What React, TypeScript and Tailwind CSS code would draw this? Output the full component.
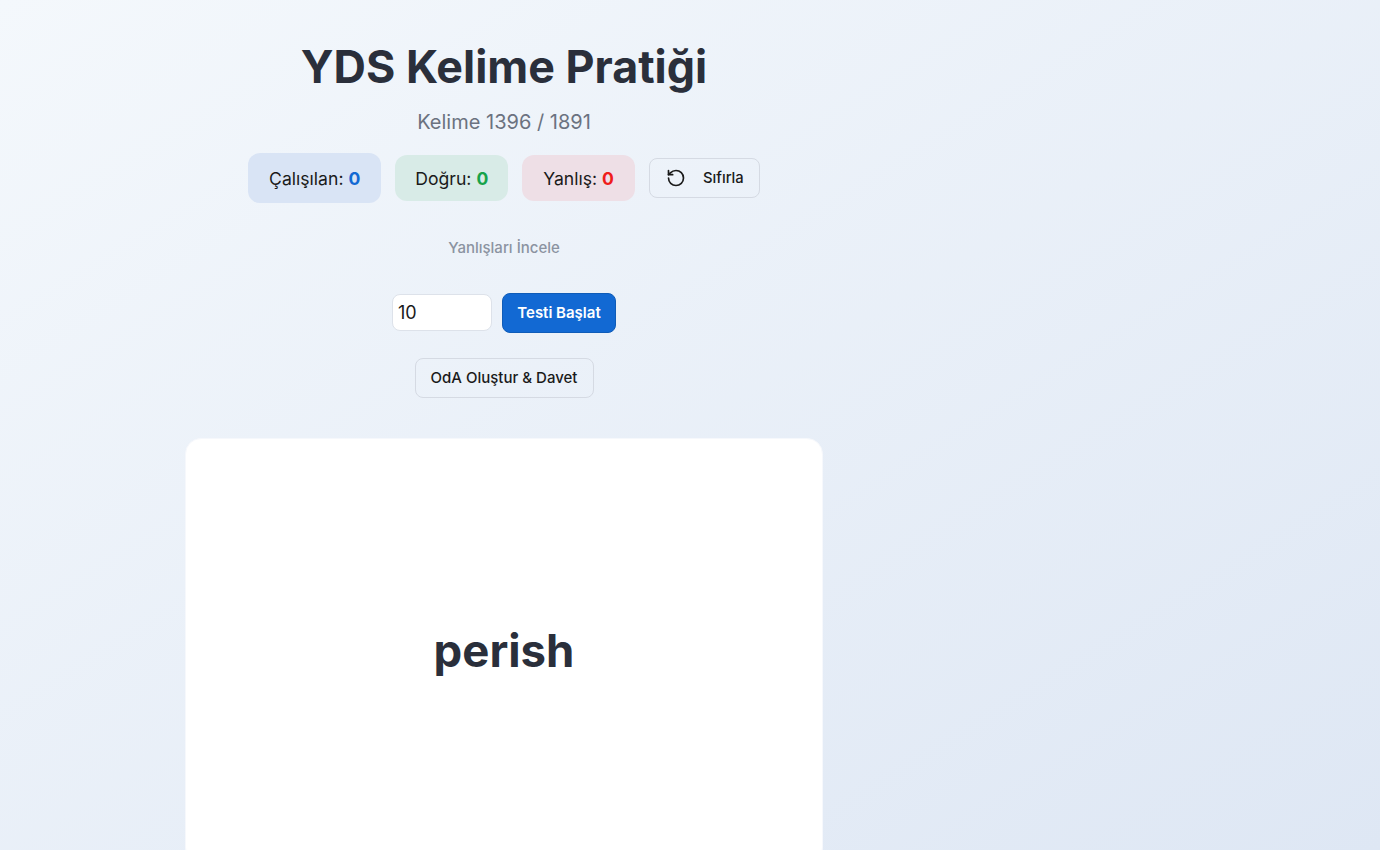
import { RotateCcw } from 'lucide-react'

function Stat({ label, value, className, valueClass }: { label: string; value: number; className: string; valueClass: string }) {
  return (
    <div className={`rounded-xl text-[17.6px] leading-[26px] text-[#1a1a1a] ${className}`}>
      {label}: <span className={`font-bold ${valueClass}`}>{value}</span>
    </div>
  )
}

export default function App() {
  return (
    <div className="h-[850px] overflow-hidden bg-[linear-gradient(to_bottom_right,#f4f8fc,#dee7f4)] font-['Inter',sans-serif]">
      <div className="w-[638px] ml-[185px] flex flex-col items-center">
        <h1 className="mt-[37px] text-[44.8px] leading-[60px] font-bold text-[#2a2f3b]">YDS Kelime Pratiği</h1>
        <p className="mt-[10px] text-[20px] leading-[30px] text-[#6b7280]">Kelime 1396 / 1891</p>

        {/* Stats row */}
        <div className="mt-[16px] flex items-center gap-[14px]">
          <Stat label="Çalışılan" value={0} className="px-[21px] pt-[13px] pb-[11px] bg-[#d9e4f5]" valueClass="text-[#1269d3]" />
          <Stat label="Doğru" value={0} className="px-5 pt-[11px] pb-[9px] bg-[#d8ebe7]" valueClass="text-[#16a34a]" />
          <Stat label="Yanlış" value={0} className="px-[21px] pt-[11px] pb-[9px] bg-[#eedfe6]" valueClass="text-[#ef1c1c]" />
          <button className="w-[111px] h-[40px] flex items-center pl-4 gap-[17px] rounded-lg border border-[#d5dae3] text-[14.8px] font-medium text-[#1a1a1a]">
            <RotateCcw size={20} strokeWidth={2} />
            Sıfırla
          </button>
        </div>

        <button className="mt-[34px] text-[15px] leading-[22px] font-medium text-[#8b93a1]">Yanlışları İncele</button>

        <div className="mt-[34px] flex items-center gap-[10px]">
          <input
            defaultValue="10"
            className="w-[100px] h-[37px] mb-px px-[5px] rounded-lg border border-[#dde2ea] bg-white text-[18px] text-[#1a1a1a] outline-none"
          />
          <button className="w-[114px] h-[40px] rounded-lg border border-[#0f5cb8] bg-[#1269d3] text-[15px] font-semibold text-white">
            Testi Başlat
          </button>
        </div>

        <button className="mt-[25px] w-[179px] h-[40px] rounded-lg border border-[#d5dae3] text-[15px] font-medium text-[#1a1a1a]">
          OdA Oluştur &amp; Davet
        </button>

        {/* Flashcard */}
        <div className="mt-[40px] w-full h-[426px] flex items-center justify-center rounded-2xl border border-[#f6f8fc] bg-white">
          <span className="text-[45.5px] font-bold text-[#2a2f3b]">perish</span>
        </div>
      </div>
    </div>
  )
}
